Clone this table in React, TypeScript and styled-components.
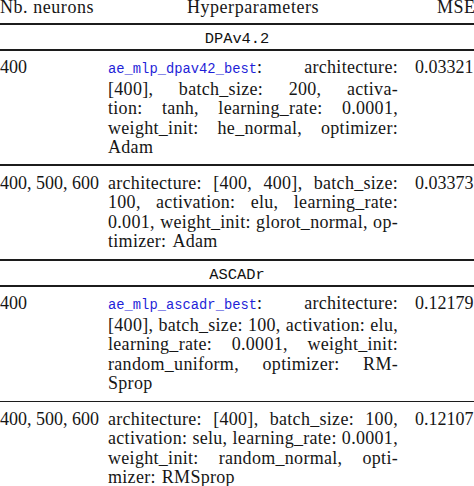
import React from 'react';
import styled, { createGlobalStyle } from 'styled-components';

const Global = createGlobalStyle`
  html, body { margin: 0; padding: 0; background: #ffffff; }
  body { overflow: hidden; }
`;

const Table = styled.div`
  width: 474px;
  font-family: "Liberation Serif", "Times New Roman", serif;
  font-size: 18px;
  line-height: 19.6px;
  color: #161616;
`;

const Grid = styled.div`
  display: grid;
  grid-template-columns: 108px 290px 1fr;
`;

const HeadRow = styled(Grid)`
  line-height: 14px;
  padding-bottom: 8.5px;
`;

const HeadCell = styled.div<{ $align?: 'left' | 'center'; $indent?: number }>`
  text-align: ${(p) => p.$align ?? 'left'};
  padding-left: ${(p) => p.$indent ?? 0}px;
  letter-spacing: 0.55px;
  white-space: nowrap;
`;

const Rule = styled.div<{ $thick?: boolean }>`
  height: ${(p) => (p.$thick ? 2 : 1.7)}px;
  background: #1c1c1c;
`;

const SectionTitle = styled.div`
  padding-top: 4px;
  line-height: 20px;
  text-align: center;
  font-family: "Liberation Mono", "DejaVu Sans Mono", monospace;
  font-size: 15.4px;
  color: #111111;
`;

const DataRow = styled(Grid)`
  padding: 7.5px 0 6.5px;
`;

const NeuronCell = styled.div`
  white-space: nowrap;
`;

const ParamCell = styled.div`
  display: flex;
  flex-direction: column;
  letter-spacing: 0.3px;
`;

const Line = styled.div<{ $last?: boolean }>`
  display: flex;
  justify-content: ${(p) => (p.$last ? 'flex-start' : 'space-between')};
  gap: ${(p) => (p.$last ? '6px' : '0')};
  white-space: nowrap;
`;

const MseCell = styled.div`
  padding-left: 17px;
  white-space: nowrap;
`;

const Link = styled.span`
  font-family: "Liberation Mono", "DejaVu Sans Mono", monospace;
  font-size: 13.8px;
  letter-spacing: 0;
  color: #1f1fd8;
`;

type Row = {
  neurons: string;
  link?: string;
  lines: string[];
  mse: string;
};

type Section = { name: string; rows: Row[] };

const sections: Section[] = [
  {
    name: 'DPAv4.2',
    rows: [
      {
        neurons: '400',
        link: 'ae_mlp_dpav42_best',
        lines: [
          ': architecture:',
          '[400], batch_size: 200, activa-',
          'tion: tanh, learning_rate: 0.0001,',
          'weight_init: he_normal, optimizer:',
          'Adam',
        ],
        mse: '0.03321',
      },
      {
        neurons: '400, 500, 600',
        lines: [
          'architecture: [400, 400], batch_size:',
          '100, activation: elu, learning_rate:',
          '0.001, weight_init: glorot_normal, op-',
          'timizer: Adam',
        ],
        mse: '0.03373',
      },
    ],
  },
  {
    name: 'ASCADr',
    rows: [
      {
        neurons: '400',
        link: 'ae_mlp_ascadr_best',
        lines: [
          ': architecture:',
          '[400], batch_size: 100, activation: elu,',
          'learning_rate: 0.0001, weight_init:',
          'random_uniform, optimizer: RM-',
          'Sprop',
        ],
        mse: '0.12179',
      },
      {
        neurons: '400, 500, 600',
        lines: [
          'architecture: [400], batch_size: 100,',
          'activation: selu, learning_rate: 0.0001,',
          'weight_init: random_normal, opti-',
          'mizer: RMSprop',
        ],
        mse: '0.12107',
      },
    ],
  },
];

function renderLine(text: string, idx: number, total: number, link?: string) {
  const last = idx === total - 1;
  if (idx === 0 && link) {
    const words = text.replace(/^:\s*/, '').split(' ');
    return (
      <Line key={idx} $last={last}>
        <span>
          <Link>{link}</Link>:
        </span>
        {words.map((w, i) => (
          <span key={i}>{w}</span>
        ))}
      </Line>
    );
  }
  const words = text.split(' ');
  return (
    <Line key={idx} $last={last}>
      {words.map((w, i) => (
        <span key={i}>{w}</span>
      ))}
    </Line>
  );
}

export default function App() {
  return (
    <>
      <Global />
      <Table>
        <HeadRow>
          <HeadCell>Nb. neurons</HeadCell>
          <HeadCell $align="center">Hyperparameters</HeadCell>
          <HeadCell $indent={39}>MSE</HeadCell>
        </HeadRow>
        <Rule $thick />
        {sections.map((s) => (
          <React.Fragment key={s.name}>
            <SectionTitle>{s.name}</SectionTitle>
            <Rule $thick />
            {s.rows.map((r, ri) => (
              <React.Fragment key={ri}>
                <DataRow>
                  <NeuronCell>{r.neurons}</NeuronCell>
                  <ParamCell>
                    {r.lines.map((l, i) => renderLine(l, i, r.lines.length, r.link))}
                  </ParamCell>
                  <MseCell>{r.mse}</MseCell>
                </DataRow>
                <Rule $thick={ri === s.rows.length - 1} />
              </React.Fragment>
            ))}
          </React.Fragment>
        ))}
      </Table>
    </>
  );
}
